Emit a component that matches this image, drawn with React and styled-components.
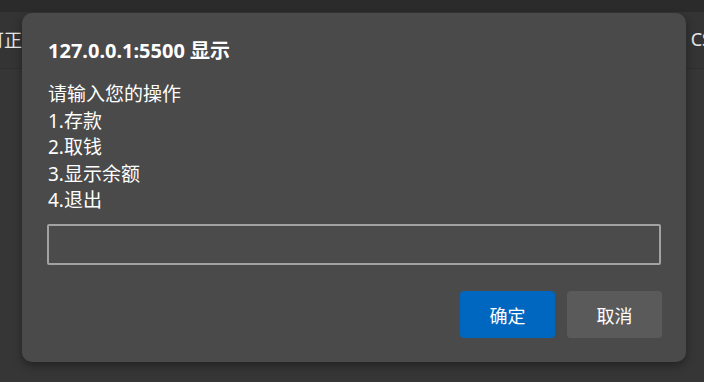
import React from 'react';
import styled, { createGlobalStyle } from 'styled-components';

const GlobalStyle = createGlobalStyle`
  html, body {
    margin: 0;
    padding: 0;
    width: 704px;
    height: 382px;
    overflow: hidden;
    background: #363636;
    font-family: "Noto Sans", "Noto Sans CJK SC", sans-serif;
  }
`;

const Page = styled.div`
  position: relative;
  width: 704px;
  height: 382px;
  overflow: hidden;
  background: #363636;
`;

const TopStrip = styled.div`
  height: 12px;
  background: #2b2b2b;
`;

const TabRow = styled.div`
  height: 56px;
  display: flex;
  align-items: center;
  justify-content: space-between;
  border-bottom: 1px solid #2f2f2f;
  background: #343434;
  color: #e8e8e8;
  font-size: 18px;
`;

const PartialText = styled.span`
  margin-left: ${(p) => p.$shift}px;
  margin-right: ${(p) => p.$shiftRight || 0}px;
  white-space: nowrap;
  margin-top: -2px;
`;

const Overlay = styled.div`
  position: absolute;
  left: 22px;
  top: 13px;
`;

const Dialog = styled.div`
  width: 664px;
  height: 349px;
  box-sizing: border-box;
  padding: 24px 25px 24px 26px;
  background: #4a4a4a;
  border-radius: 10px;
  box-shadow: 0 4px 10px rgba(0, 0, 0, 0.35);
  display: flex;
  flex-direction: column;
  color: #ffffff;
`;

const Title = styled.div`
  font-size: 20px;
  font-weight: 700;
  line-height: 28px;
`;

const Message = styled.div`
  margin-top: 16px;
  font-size: 19px;
  line-height: 26.5px;
`;

const Input = styled.input`
  margin-top: 10px;
  height: 41px;
  box-sizing: border-box;
  width: 614px;
  margin-left: -1px;
  border: 2px solid #a2a2a2;
  border-radius: 2px;
  background: #4b4b4b;
  color: #fff;
  font-size: 18px;
  padding: 0 8px;
  outline: none;
`;

const Actions = styled.div`
  margin-top: auto;
  display: flex;
  justify-content: flex-end;
  gap: 12px;
  margin-right: -1px;
`;

const Button = styled.button`
  width: 95px;
  height: 47px;
  border: none;
  border-radius: 4px;
  font-family: "Noto Sans CJK SC", sans-serif;
  font-size: 18px;
  color: #ffffff;
  background: ${(p) => (p.$primary ? '#0067c0' : '#5a5a5a')};
  cursor: pointer;
`;

export default function App() {
  return (
    <>
      <GlobalStyle />
      <Page>
        <TopStrip />
        <TabRow>
          <PartialText $shift={-14}>可正</PartialText>
          <PartialText $shift={0} $shiftRight={-8}>CS</PartialText>
        </TabRow>
        <Overlay>
          <Dialog>
            <Title>127.0.0.1:5500 显示</Title>
            <Message>
              请输入您的操作
              <br />
              1.存款
              <br />
              2.取钱
              <br />
              3.显示余额
              <br />
              4.退出
            </Message>
            <Input type="text" />
            <Actions>
              <Button $primary>确定</Button>
              <Button>取消</Button>
            </Actions>
          </Dialog>
        </Overlay>
      </Page>
    </>
  );
}
